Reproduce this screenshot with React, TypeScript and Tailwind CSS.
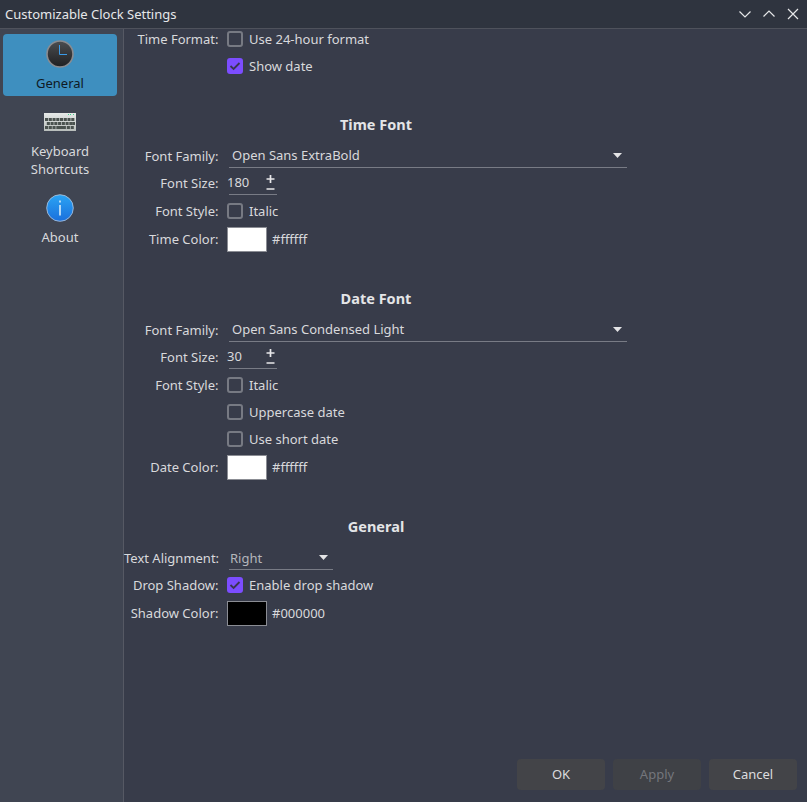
import type React from 'react'

const FONT = { fontFamily: '"Noto Sans", sans-serif' }

const Row: React.FC<{ label?: string; h: string; children: React.ReactNode }> = ({ label, h, children }) => (
  <div className={`flex items-center ${h}`}>
    <div className="w-[94.5px] shrink-0 text-right whitespace-nowrap">{label}</div>
    <div className="ml-[8.5px] flex items-center flex-1">{children}</div>
  </div>
)

const Check: React.FC<{ checked?: boolean; text: string }> = ({ checked, text }) => (
  <div className="flex items-center">
    {checked ? (
      <div className="w-4 h-4 rounded-[3px] bg-[#7c4dff] flex items-center justify-center">
        <svg width="12" height="12" viewBox="0 0 12 12" fill="none">
          <path d="M1.5 6 L4.6 9 L10.5 3" stroke="#3a3550" strokeWidth="1.8" />
        </svg>
      </div>
    ) : (
      <div className="w-4 h-4 rounded-[3px] border-2 border-[#777a83]" />
    )}
    <span className="ml-[6px]">{text}</span>
  </div>
)

const Swatch: React.FC<{ color: string; bg: string }> = ({ color, bg }) => (
  <div className="flex items-center">
    <div className={`w-10 h-[25px] border border-[#8b8d94] ${bg}`} />
    <span className="ml-[5px]">{color}</span>
  </div>
)

const Combo: React.FC<{ text: string; w: string; muted?: boolean }> = ({ text, w, muted }) => (
  <div className={`ml-[2px] h-[24px] flex items-center justify-between pr-[5px] border-b border-[#787b85] ${w} ${muted ? 'pl-[1px]' : 'pl-[3px]'}`}>
    <span className={muted ? 'text-[#b4b6bb]' : '-mt-[1px]'}>{text}</span>
    <svg width="9" height="5" viewBox="0 0 9 5">
      <path d="M0 0 H9 L4.5 5 Z" fill="#e4e4e6" />
    </svg>
  </div>
)

const Spin: React.FC<{ value: string }> = ({ value }) => (
  <div className="relative w-[50px] h-[24px]">
    <span className="absolute left-0 top-[2px]">{value}</span>
    <div className="absolute left-[2px] right-0 bottom-0 border-b border-[#787b85]" />
    <svg width="9" height="18" viewBox="0 0 9 18" className="absolute left-[39px] top-[2px]">
      <path d="M0.5 6 H8.5 M4.5 2 V10 M0.5 16 H8.5" stroke="#e8e8ea" strokeWidth="1.7" />
    </svg>
  </div>
)

const Heading: React.FC<{ text: string; cls: string }> = ({ text, cls }) => (
  <div className={`text-center font-bold text-[14.5px] leading-[20px] text-[#e4e5e7] ${cls}`}>{text}</div>
)

const ClockIcon = () => (
  <svg width="30" height="30" viewBox="0 0 30 30">
    <defs>
      <linearGradient id="clockFace" x1="0" y1="0" x2="0" y2="1">
        <stop offset="0" stopColor="#4b4d50" />
        <stop offset="1" stopColor="#1f2022" />
      </linearGradient>
    </defs>
    <circle cx="15" cy="15" r="13" fill="url(#clockFace)" stroke="#8a8c90" strokeWidth="1.6" />
    <path d="M14.5 6 V15.5 H22" fill="none" stroke="#3a9be8" strokeWidth="1" />
  </svg>
)

const KeyboardIcon = () => {
  const keys: [number, number, number][] = []
  for (let i = 0; i < 8; i++) keys.push([1 + i * 3.75, 5, 3.1])
  for (let i = 0; i < 7; i++) keys.push([1 + i * 3.75 + 1.8, 9, 3.1])
  keys.push([28.2, 9, 2.8])
  for (let i = 0; i < 3; i++) keys.push([1 + i * 3.75, 13, 3.1])
  keys.push([12.3, 13, 9.6])
  for (let i = 0; i < 2; i++) keys.push([22.8 + i * 3.9, 13, 3.1])
  return (
    <svg width="32" height="18" viewBox="0 0 32 18">
      <defs>
        <linearGradient id="kbBody" x1="0" y1="0" x2="0" y2="1">
          <stop offset="0" stopColor="#e6e9e8" />
          <stop offset="1" stopColor="#b8bdbb" />
        </linearGradient>
      </defs>
      <rect x="0" y="0" width="32" height="18" fill="url(#kbBody)" />
      <rect x="24" y="1" width="1" height="1" fill="#3fd08a" />
      <rect x="26" y="1" width="1" height="1" fill="#3fd08a" />
      <rect x="29" y="1" width="1" height="1" fill="#3fd08a" />
      {keys.map(([x, y, w], i) => (
        <rect key={i} x={x} y={y} width={w} height="3" fill="#4a524f" />
      ))}
    </svg>
  )
}

const InfoIcon = () => (
  <svg width="28" height="28" viewBox="0 0 28 28">
    <defs>
      <linearGradient id="infoFill" x1="0" y1="0" x2="0" y2="1">
        <stop offset="0" stopColor="#2aa4f4" />
        <stop offset="1" stopColor="#1a6fdc" />
      </linearGradient>
    </defs>
    <circle cx="14" cy="14" r="13.3" fill="url(#infoFill)" stroke="#b4c8de" strokeWidth="0.8" />
    <rect x="13.2" y="6.5" width="1.6" height="2" fill="#d5ebfb" />
    <rect x="13.2" y="11" width="1.6" height="10.5" fill="#d5ebfb" />
  </svg>
)

export default function App() {
  return (
    <div style={FONT} className="w-[807px] h-[802px] flex flex-col bg-[#383c4a] text-[13px] leading-[18px] text-[#d8d9dc] overflow-hidden">
      {/* title bar */}
      <div className="h-[29px] shrink-0 bg-[#2f343f] border-b border-[#4f525c] flex items-center justify-between pl-[5px] pr-[8px] text-[#e6e7e9]">
        <span>Customizable Clock Settings</span>
        <div className="flex items-center gap-[12px]">
          <svg width="12" height="12" viewBox="0 0 12 12" fill="none"><path d="M0.5 3.5 L6 9 L11.5 3.5" stroke="#e6e7e9" strokeWidth="1.2" /></svg>
          <svg width="12" height="12" viewBox="0 0 12 12" fill="none"><path d="M0.5 8.5 L6 3 L11.5 8.5" stroke="#e6e7e9" strokeWidth="1.2" /></svg>
          <svg width="12" height="12" viewBox="0 0 12 12" fill="none"><path d="M1 1 L11 11 M11 1 L1 11" stroke="#e6e7e9" strokeWidth="1.2" /></svg>
        </div>
      </div>

      <div className="flex flex-1 min-h-0">
        {/* sidebar */}
        <div className="w-[124px] shrink-0 bg-[#404552] border-r border-[#565964] pt-[5px] pl-[3px]">
          <div className="w-[114px] h-[62px] rounded-[4px] bg-[#3e8fbf] flex flex-col items-center pt-[5px] text-[#0f1a24]">
            <ClockIcon />
            <span className="mt-[5px]">General</span>
          </div>
          <div className="w-[114px] flex flex-col items-center pt-[17px]">
            <KeyboardIcon />
            <span className="mt-[11px] text-center">Keyboard<br />Shortcuts</span>
          </div>
          <div className="w-[114px] flex flex-col items-center pt-[16px]">
            <InfoIcon />
            <span className="mt-[6px]">About</span>
          </div>
        </div>

        {/* form */}
        <div className="flex-1 flex flex-col min-w-0">
          <div className="flex-1 w-[504px]">
            <Row label="Time Format:" h="h-[20px]"><Check text="Use 24-hour format" /></Row>
            <Row h="h-[34px]"><Check checked text="Show date" /></Row>
            <Heading text="Time Font" cls="mt-[31px] mb-[9px]" />
            <Row label="Font Family:" h="h-[26px]"><Combo text="Open Sans ExtraBold" w="w-[398px]" /></Row>
            <Row label="Font Size:" h="h-[28px]"><Spin value="180" /></Row>
            <Row label="Font Style:" h="h-[28px]"><Check text="Italic" /></Row>
            <Row label="Time Color:" h="h-[28px]"><Swatch color="#ffffff" bg="bg-white" /></Row>
            <Heading text="Date Font" cls="mt-[35px] mb-[9px]" />
            <Row label="Font Family:" h="h-[26px]"><Combo text="Open Sans Condensed Light" w="w-[398px]" /></Row>
            <Row label="Font Size:" h="h-[28px]"><Spin value="30" /></Row>
            <Row label="Font Style:" h="h-[28px]"><Check text="Italic" /></Row>
            <Row h="h-[26px]"><Check text="Uppercase date" /></Row>
            <Row h="h-[28px]"><Check text="Use short date" /></Row>
            <Row label="Date Color:" h="h-[28px]"><Swatch color="#ffffff" bg="bg-white" /></Row>
            <Heading text="General" cls="mt-[35px] mb-[9px]" />
            <Row label="Text Alignment:" h="h-[26px]">
              <Combo text="Right" w="w-[104px]" muted />
            </Row>
            <Row label="Drop Shadow:" h="h-[28px]"><Check checked text="Enable drop shadow" /></Row>
            <Row label="Shadow Color:" h="h-[28px]"><Swatch color="#000000" bg="bg-black" /></Row>
          </div>
          <div className="flex justify-end gap-2 pr-[10px] pb-[12px]">
            <button className="w-[88px] h-[31px] pb-[1px] rounded-[4px] bg-[#434448] text-[#dcdcde]">OK</button>
            <button className="w-[88px] h-[31px] pb-[1px] rounded-[4px] bg-[#3f4146] text-[#74767c]">Apply</button>
            <button className="w-[88px] h-[31px] pb-[1px] rounded-[4px] bg-[#434448] text-[#dcdcde]">Cancel</button>
          </div>
        </div>
      </div>
    </div>
  )
}
